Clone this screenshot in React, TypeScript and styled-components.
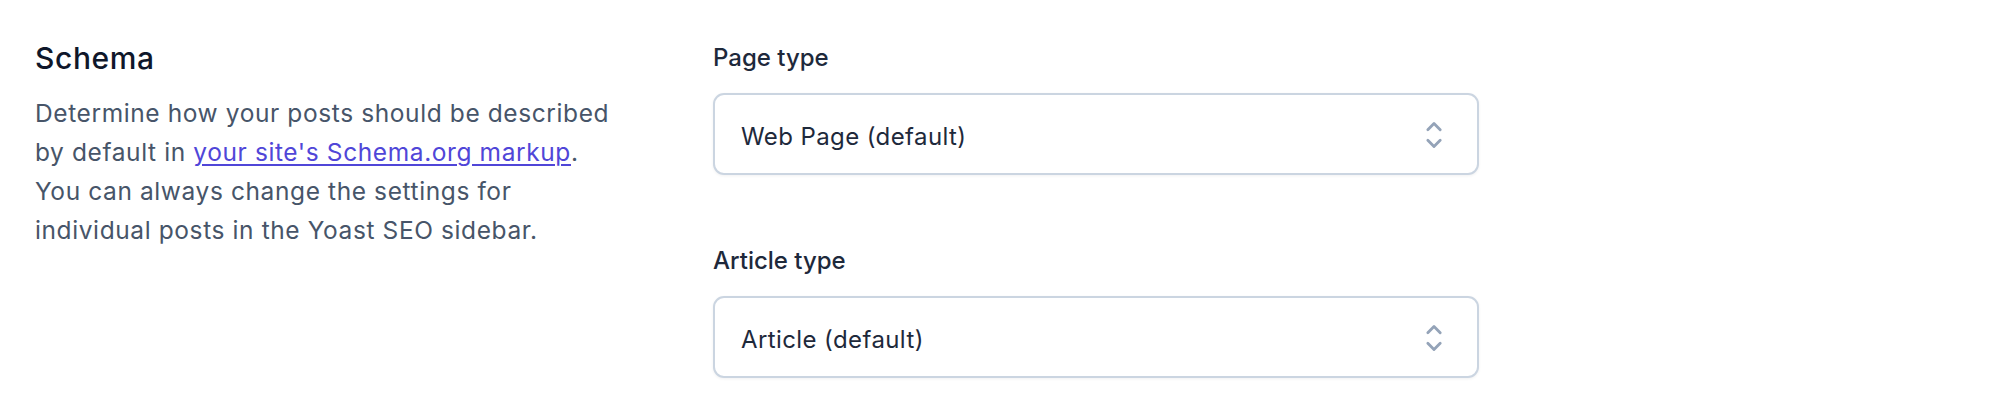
import React from "react";
import styled, { createGlobalStyle } from "styled-components";

const Global = createGlobalStyle`
  html, body { margin: 0; padding: 0; background: #ffffff; }
  body { font-family: Inter, "Noto Sans", "Liberation Sans", sans-serif; -webkit-font-smoothing: antialiased; }
  * { box-sizing: border-box; }
`;

const Page = styled.div`
  display: flex;
  align-items: flex-start;
  padding: 37px 0 0 35px;
  width: 2008px;
  height: 414px;
`;

const Intro = styled.section`
  width: 678px;
  flex: none;
`;

const Heading = styled.h2`
  margin: 0;
  font-size: 30px;
  line-height: 42px;
  font-weight: 500;
  letter-spacing: 0.6px;
  color: #0f172a;
`;

const Description = styled.p`
  margin: 14.5px 0 0;
  width: 576px;
  font-size: 24.5px;
  line-height: 39px;
  font-weight: 400;
  letter-spacing: 0.6px;
  color: #475569;
`;

const Link = styled.a`
  color: #5046d8;
  text-decoration: underline;
  text-underline-offset: 3px;
  text-decoration-thickness: 2px;
`;

const Fields = styled.div`
  display: flex;
  flex-direction: column;
  gap: 68px;
  width: 766px;
  margin-top: 3px;
`;

const Field = styled.div`
  display: flex;
  flex-direction: column;
`;

const Label = styled.label`
  font-size: 24px;
  line-height: 35px;
  font-weight: 500;
  color: #1e293b;
  margin-bottom: 18px;
`;

const SelectBox = styled.button`
  display: flex;
  align-items: center;
  justify-content: space-between;
  width: 100%;
  height: 82px;
  padding: 4px 24px 0 26px;
  background: #ffffff;
  border: 2px solid #cbd5e1;
  border-radius: 11px;
  box-shadow: 0 1px 3px rgba(15, 23, 42, 0.06);
  font-family: inherit;
  font-size: 24px;
  line-height: 35px;
  letter-spacing: 0.4px;
  color: #1e293b;
  text-align: left;
  cursor: pointer;
`;

const Value = styled.span`
  white-space: nowrap;
`;

const ChevronIcon = styled.svg`
  width: 38px;
  height: 38px;
  margin-top: -3px;
  flex: none;
  color: #94a3b8;
`;

const UpDown = () => (
  <ChevronIcon viewBox="0 0 20 20" fill="currentColor" aria-hidden="true">
    <path
      fillRule="evenodd"
      d="M10.53 3.47a.75.75 0 0 0-1.06 0L6.22 6.72a.75.75 0 0 0 1.06 1.06L10 5.06l2.72 2.72a.75.75 0 1 0 1.06-1.06l-3.25-3.25Zm-4.31 9.81 3.25 3.25a.75.75 0 0 0 1.06 0l3.25-3.25a.75.75 0 1 0-1.06-1.06L10 14.94l-2.72-2.72a.75.75 0 0 0-1.06 1.06Z"
      clipRule="evenodd"
    />
  </ChevronIcon>
);

const fields = [
  { id: "page-type", label: "Page type", value: "Web Page (default)" },
  { id: "article-type", label: "Article type", value: "Article (default)" },
];

export default function App() {
  return (
    <>
      <Global />
      <Page>
        <Intro>
          <Heading>Schema</Heading>
          <Description>
            Determine how your posts should be described by default in{" "}
            <Link href="#">your site's Schema.org markup</Link>. You can always change the settings for individual
            posts in the Yoast SEO sidebar.
          </Description>
        </Intro>
        <Fields>
          {fields.map((f) => (
            <Field key={f.id}>
              <Label htmlFor={f.id}>{f.label}</Label>
              <SelectBox id={f.id} type="button">
                <Value>{f.value}</Value>
                <UpDown />
              </SelectBox>
            </Field>
          ))}
        </Fields>
      </Page>
    </>
  );
}
